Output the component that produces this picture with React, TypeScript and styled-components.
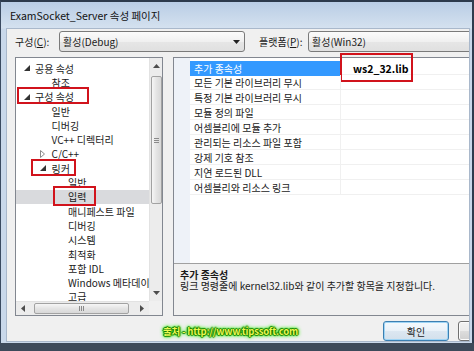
import React from 'react';
import styled, { createGlobalStyle } from 'styled-components';

const GlobalStyle = createGlobalStyle`
  html, body { margin: 0; padding: 0; }
  body {
    width: 474px;
    height: 351px;
    overflow: hidden;
    background: #3a4757;
    font-family: "Noto Sans CJK KR", "Liberation Sans", sans-serif;
    font-size: 10px;
    color: #1a1a1a;
  }
`;

const Window = styled.div`
  box-sizing: border-box;
  width: 474px;
  height: 351px;
  display: flex;
  flex-direction: column;
  border-top: 2px solid #2c3a4c;
  border-left: 1px solid #3a4a60;
  border-right: 2px solid #2e3c4e;
  background: linear-gradient(#b9cde5, #d4e1ef 26px, #c9d8ea 27px, #c9d8ea);
`;

const TitleBar = styled.div`
  height: 26px;
  display: flex;
  align-items: center;
  padding-left: 9px;
  color: #111;
  font-size: 10.5px;
`;

const Client = styled.div`
  flex: 1;
  margin: 0 2px 1px 5px;
  border: 1px solid #a9b8cb;
  background: #f0f0f0;
  overflow: hidden;
  display: flex;
  flex-direction: column;
  padding-left: 8px;
`;

const BottomEdge = styled.div`
  height: 8px;
  background: #3d4a5a;
  margin: 0 -2px 0 -1px;
`;

const ComboRow = styled.div`
  display: flex;
  align-items: center;
  height: 21px;
  margin-top: 2px;
`;

const Label = styled.span<{ $w: number }>`
  width: ${p => p.$w}px;
  flex: none;
  white-space: nowrap;
`;

const Combo = styled.div<{ $w: number; $gap?: number }>`
  box-sizing: border-box;
  width: ${p => p.$w}px;
  flex: none;
  height: 21px;
  margin-right: ${p => p.$gap ?? 0}px;
  border: 1px solid #7a7a7a;
  border-radius: 3px;
  background: linear-gradient(#fbfbfb, #f0f0f0 50%, #e6e6e6 51%, #e0e0e0);
  display: flex;
  align-items: center;
  padding: 0 4px 0 3px;
`;

const ComboText = styled.span`
  flex: 1;
  white-space: nowrap;
`;

const Content = styled.div`
  display: flex;
  gap: 10px;
  margin-top: 5px;
  height: 259px;
`;

const Tree = styled.div`
  box-sizing: border-box;
  width: 148px;
  flex: none;
  border: 1px solid #828790;
  background: #fff;
  display: grid;
  grid-template-columns: 1fr 13px;
  grid-template-rows: 1fr 14px;
`;

const TreeList = styled.div`
  position: relative;
  overflow: hidden;
  padding-top: 3px;
`;

const TreeRow = styled.div<{ $level: number; $selected?: boolean }>`
  position: relative;
  height: 14.3px;
  display: flex;
  align-items: center;
  padding-left: ${p => 3 + p.$level * 16.5}px;
  white-space: nowrap;
  background: ${p => (p.$selected ? '#d9dadd' : 'transparent')};
`;

const Expander = styled.span`
  width: 16px;
  flex: none;
  display: flex;
  align-items: center;
  padding-left: 4.5px;
  box-sizing: border-box;
`;

const Mark = styled.span<{ $x: number; $y: number; $w: number; $h: number }>`
  position: absolute;
  left: ${p => p.$x}px;
  top: ${p => p.$y}px;
  width: ${p => p.$w}px;
  height: ${p => p.$h}px;
  box-sizing: border-box;
  border: 2px solid #d1131c;
  pointer-events: none;
`;

const VScroll = styled.div`
  background: #ececec;
  border-left: 1px solid #e2e2e2;
  display: flex;
  flex-direction: column;
  align-items: center;
`;

const HScroll = styled.div`
  background: #ececec;
  border-top: 1px solid #e2e2e2;
  display: flex;
  align-items: center;
`;

const Corner = styled.div`
  background: #f0f0f0;
`;

const ArrowBox = styled.div<{ $size: number }>`
  width: ${p => p.$size}px;
  height: ${p => p.$size}px;
  flex: none;
  display: flex;
  align-items: center;
  justify-content: center;
`;

const VThumb = styled.div`
  box-sizing: border-box;
  width: 11px;
  height: 128px;
  margin-top: 2px;
  border: 1px solid #a2a2a2;
  border-radius: 2px;
  background: linear-gradient(to right, #f6f6f6, #e4e4e4 50%, #d8d8d8);
  display: flex;
  align-items: center;
  justify-content: center;
`;

const HThumb = styled.div`
  box-sizing: border-box;
  height: 11px;
  width: 95px;
  margin-left: 4px;
  border: 1px solid #a2a2a2;
  border-radius: 2px;
  background: linear-gradient(#f6f6f6, #e4e4e4 50%, #d8d8d8);
  display: flex;
  align-items: center;
  justify-content: center;
`;

const Grip = styled.span<{ $vertical?: boolean }>`
  display: flex;
  flex-direction: ${p => (p.$vertical ? 'column' : 'row')};
  gap: 1px;
  & > i {
    display: block;
    background: #8a8a8a;
    width: ${p => (p.$vertical ? '5px' : '1px')};
    height: ${p => (p.$vertical ? '1px' : '5px')};
  }
`;

const Spacer = styled.div`
  flex: 1;
`;

const RightPanel = styled.div`
  box-sizing: border-box;
  width: 310px;
  flex: none;
  border: 1px solid #828790;
  display: flex;
  flex-direction: column;
`;

const Grid = styled.div`
  height: 205px;
  background: #fff;
  display: flex;
`;

const Gutter = styled.div`
  width: 16px;
  flex: none;
  background: #eef2f8;
`;

const Table = styled.div`
  flex: 1;
  padding-top: 2px;
`;

const PropRow = styled.div`
  box-sizing: border-box;
  height: 15px;
  display: grid;
  grid-template-columns: 150px 1fr;
  border-bottom: 1px solid #f0f0f0;
`;

const NameCell = styled.div<{ $selected?: boolean }>`
  position: relative;
  display: flex;
  align-items: center;
  padding-left: 4px;
  margin-top: ${p => (p.$selected ? '1px' : '0')};
  white-space: nowrap;
  background: ${p => (p.$selected ? '#3399ff' : 'transparent')};
  color: ${p => (p.$selected ? '#fff' : '#1a1a1a')};
`;

const ValueCell = styled.div`
  position: relative;
  display: flex;
  align-items: center;
  padding-left: 12px;
  border-left: 1px solid #f0f0f0;
  font-weight: 700;
  font-size: 10.5px;
  color: #000;
`;

const Splitter = styled.div`
  height: 3px;
  background: #f0f0f0;
  border-top: 1px solid #a0a0a0;
  box-sizing: border-box;
`;

const Description = styled.div`
  flex: 1;
  background: #f0f0f0;
  padding: 3px 0 0 6px;
  line-height: 12px;
`;

const DescTitle = styled.div`
  font-weight: 700;
  margin-bottom: -1px;
`;

const Footer = styled.div`
  height: 25px;
  display: flex;
  align-items: flex-start;
  padding-left: 148px;
`;

const Watermark = styled.div`
  width: 220px;
  flex: none;
  margin-top: 8px;
  line-height: 14px;
  font-weight: 700;
  font-size: 9.5px;
  letter-spacing: -0.2px;
  color: #e8fa50;
  white-space: nowrap;
  text-shadow:
    0 0 1px #0a4a00,
    1px 0 1px #168800,
    -1px 0 1px #168800,
    0 1px 1px #168800,
    0 -1px 1px #168800,
    0 0 3px #3cff10,
    0 0 4px #3cff10,
    0 0 4px #3cff10;
`;

const Button = styled.div<{ $default?: boolean }>`
  box-sizing: border-box;
  width: 66px;
  height: 20px;
  margin-top: 5px;
  margin-right: 9px;
  flex: none;
  display: flex;
  align-items: center;
  justify-content: center;
  border: 1px solid ${p => (p.$default ? '#3c7fb1' : '#707070')};
  border-radius: 3px;
  background: ${p =>
    p.$default
      ? 'linear-gradient(#f4f9fd, #e9f1f8 50%, #dce7f1 51%, #d3e0ec)'
      : 'linear-gradient(#f2f2f2, #ebebeb 50%, #dddddd 51%, #cfcfcf)'};
  box-shadow: ${p => (p.$default ? 'inset 0 0 0 1px #9ed4f5' : 'inset 0 0 0 1px #fcfcfc')};
  color: #1a1a1a;
`;

const OpenArrow = () => (
  <svg width="6" height="6" viewBox="0 0 6 6">
    <polygon points="6,0 6,6 0,6" fill="#333" />
  </svg>
);

const ClosedArrow = () => (
  <svg width="5" height="8" viewBox="0 0 5 8">
    <polygon points="0.5,0.5 4.5,4 0.5,7.5" fill="none" stroke="#8a8a8a" strokeWidth="1" />
  </svg>
);

const Tri = ({ dir }: { dir: 'up' | 'down' | 'left' | 'right' }) => {
  const pts = {
    up: '0,4 3.5,0 7,4',
    down: '0,0 7,0 3.5,4',
    left: '4,0 4,7 0,3.5',
    right: '0,0 0,7 4,3.5',
  }[dir];
  const vertical = dir === 'up' || dir === 'down';
  return (
    <svg width={vertical ? 7 : 4} height={vertical ? 4 : 7} viewBox={vertical ? '0 0 7 4' : '0 0 4 7'}>
      <polygon points={pts} fill="#4d4d4d" />
    </svg>
  );
};

const ComboArrow = () => (
  <svg width="7" height="4" viewBox="0 0 7 4">
    <polygon points="0,0 7,0 3.5,4" fill="#222" />
  </svg>
);

type Box = { x: number; y: number; w: number; h: number };
type TreeItem = { label: string; level: number; exp?: 'open' | 'closed'; selected?: boolean; mark?: Box };

const treeItems: TreeItem[] = [
  { label: '공용 속성', level: 0, exp: 'open' },
  { label: '참조', level: 1 },
  { label: '구성 속성', level: 0, exp: 'open', mark: { x: 1, y: -2.5, w: 72, h: 17 } },
  { label: '일반', level: 1 },
  { label: '디버깅', level: 1 },
  { label: 'VC++ 디렉터리', level: 1 },
  { label: 'C/C++', level: 1, exp: 'closed' },
  { label: '링커', level: 1, exp: 'open', mark: { x: 15, y: -2, w: 45, h: 17 } },
  { label: '일반', level: 2 },
  { label: '입력', level: 2, selected: true, mark: { x: 37, y: -3.5, w: 43, h: 20 } },
  { label: '매니페스트 파일', level: 2 },
  { label: '디버깅', level: 2 },
  { label: '시스템', level: 2 },
  { label: '최적화', level: 2 },
  { label: '포함 IDL', level: 2 },
  { label: 'Windows 메타데이터', level: 2 },
  { label: '고급', level: 2 },
];

const properties = [
  '추가 종속성',
  '모든 기본 라이브러리 무시',
  '특정 기본 라이브러리 무시',
  '모듈 정의 파일',
  '어셈블리에 모듈 추가',
  '관리되는 리소스 파일 포함',
  '강제 기호 참조',
  '지연 로드된 DLL',
  '어셈블리와 리소스 링크',
];

const App = () => {
  return (
    <>
      <GlobalStyle />
      <Window>
        <TitleBar>ExamSocket_Server 속성 페이지</TitleBar>
        <Client>
          <ComboRow>
            <Label $w={44}>구성(<u>C</u>):</Label>
            <Combo $w={186} $gap={14}>
              <ComboText>활성(Debug)</ComboText>
              <ComboArrow />
            </Combo>
            <Label $w={49}>플랫폼(<u>P</u>):</Label>
            <Combo $w={200}>
              <ComboText>활성(Win32)</ComboText>
            </Combo>
          </ComboRow>

          <Content>
            <Tree>
              <TreeList>
                {treeItems.map((item, i) => (
                  <TreeRow key={i} $level={item.level} $selected={item.selected}>
                    <Expander>
                      {item.exp === 'open' && <OpenArrow />}
                      {item.exp === 'closed' && <ClosedArrow />}
                    </Expander>
                    {item.label}
                    {item.mark && (
                      <Mark $x={item.mark.x} $y={item.mark.y} $w={item.mark.w} $h={item.mark.h} />
                    )}
                  </TreeRow>
                ))}
              </TreeList>
              <VScroll>
                <ArrowBox $size={16}><Tri dir="up" /></ArrowBox>
                <VThumb>
                  <Grip $vertical><i /><i /><i /></Grip>
                </VThumb>
                <Spacer />
                <ArrowBox $size={16}><Tri dir="down" /></ArrowBox>
              </VScroll>
              <HScroll>
                <ArrowBox $size={14}><Tri dir="left" /></ArrowBox>
                <HThumb>
                  <Grip><i /><i /><i /></Grip>
                </HThumb>
                <Spacer />
                <ArrowBox $size={14}><Tri dir="right" /></ArrowBox>
              </HScroll>
              <Corner />
            </Tree>

            <RightPanel>
              <Grid>
                <Gutter />
                <Table>
                  {properties.map((name, i) => (
                    <PropRow key={name}>
                      <NameCell $selected={i === 0}>{name}</NameCell>
                      <ValueCell>
                        {i === 0 && (
                          <>
                            ws2_32.lib
                            <Mark $x={-1} $y={-7} $w={73} $h={29} />
                          </>
                        )}
                      </ValueCell>
                    </PropRow>
                  ))}
                </Table>
              </Grid>
              <Splitter />
              <Description>
                <DescTitle>추가 종속성</DescTitle>
                <div>링크 명령줄에 kernel32.lib와 같이 추가할 항목을 지정합니다.</div>
              </Description>
            </RightPanel>
          </Content>

          <Footer>
            <Watermark>출처 - http://www.tipssoft.com</Watermark>
            <Button $default>확인</Button>
            <Button>취소</Button>
          </Footer>
        </Client>
        <BottomEdge />
      </Window>
    </>
  );
};

export default App;
